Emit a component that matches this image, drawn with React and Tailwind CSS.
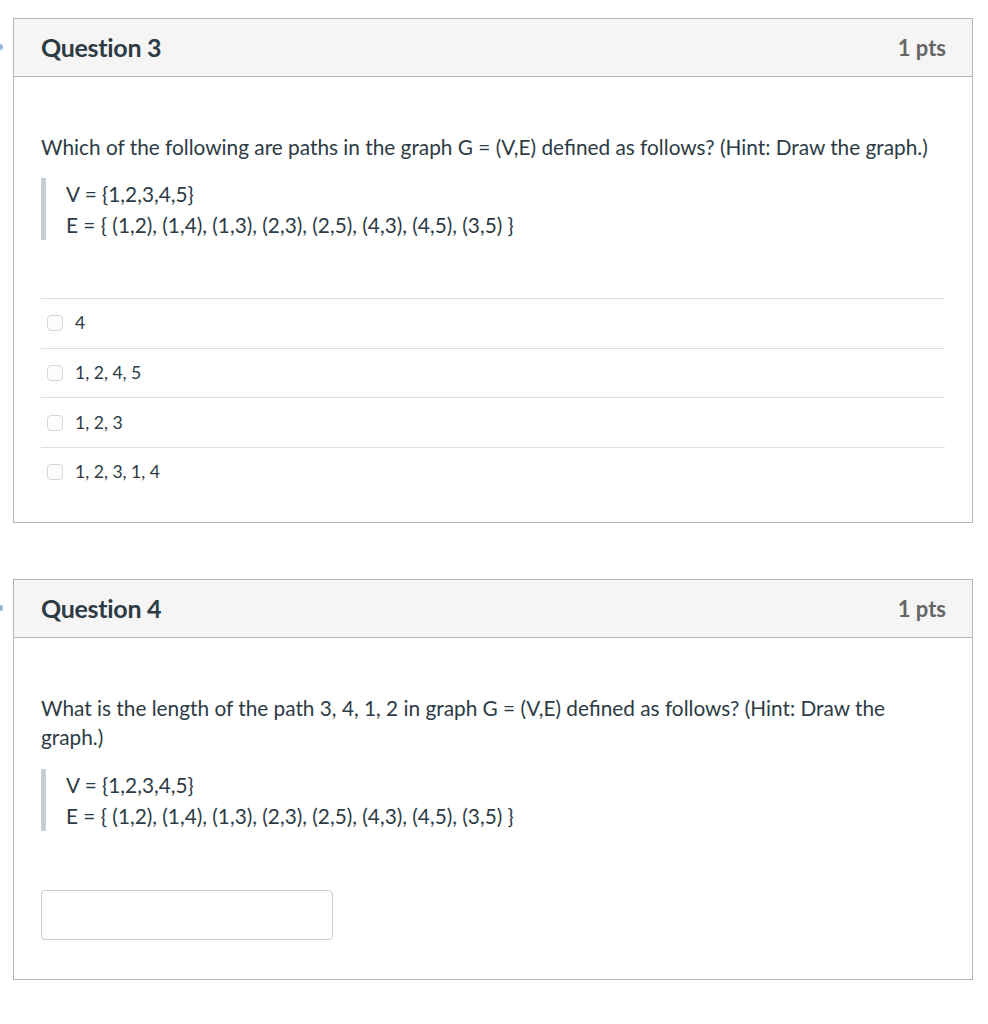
import React from "react";

const font = { fontFamily: "Lato, 'Open Sans', sans-serif" };

function Header({ title }) {
  return (
    <div className="relative flex items-center justify-between h-[58px] bg-[#f5f5f5] border-b border-[#b5b5b5] pl-[27px] pr-[26px]">
      <span className="absolute left-[-17px] top-[25px] w-[6px] h-[6px] rounded-full bg-[#8fb6dc]" />
      <span className="text-[25px] font-bold text-[#2d3b45] tracking-[-0.3px]">{title}</span>
      <span className="text-[22px] font-bold text-[#666666]">1 pts</span>
    </div>
  );
}

function Quote({ className }) {
  return (
    <div className={"border-l-[5px] border-[#c7cdd1] pl-[20px] text-[20.8px] leading-[31px] text-[#2d3b45] " + className}>
      <div>V = {"{"}1,2,3,4,5{"}"}</div>
      <div>E = {"{"} (1,2), (1,4), (1,3), (2,3), (2,5), (4,3), (4,5), (3,5) {"}"}</div>
    </div>
  );
}

function Option({ label }) {
  return (
    <div className="flex items-center h-[49.7px] border-t border-[#dddddd]">
      <span className="ml-[6px] w-[16px] h-[16px] rounded-[4px] border border-[#d6d6d6] bg-[#fdfdfd]" />
      <span className="ml-[12px] text-[17.6px] text-[#2d3b45]">{label}</span>
    </div>
  );
}

export default function App() {
  return (
    <div style={font} className="bg-white min-h-[1024px] pt-[18px] pl-[13px] w-[988px]">
      <div className="w-[960px] border border-[#b5b5b5]">
        <Header title="Question 3" />
        <div className="px-[27px] pt-[55px] pb-[25px]">
          <p className="text-[20.8px] leading-[29px] text-[#2d3b45]">
            Which of the following are paths in the graph G = (V,E) defined as follows? (Hint: Draw the graph.)
          </p>
          <Quote className="mt-[17px]" />
          <div className="mt-[58px]">
            <Option label="4" />
            <Option label="1, 2, 4, 5" />
            <Option label="1, 2, 3" />
            <Option label="1, 2, 3, 1, 4" />
          </div>
        </div>
      </div>

      <div className="w-[960px] border border-[#b5b5b5] mt-[56px]">
        <Header title="Question 4" />
        <div className="px-[27px] pt-[55px] pb-[39px]">
          <p className="text-[20.8px] leading-[29px] text-[#2d3b45]">
            What is the length of the path 3, 4, 1, 2 in graph G = (V,E) defined as follows? (Hint: Draw the graph.)
          </p>
          <Quote className="mt-[18px]" />
          <div className="mt-[59px] w-[292px] h-[50px] rounded-[4px] border border-[#cccccc] bg-white" />
        </div>
      </div>
    </div>
  );
}
